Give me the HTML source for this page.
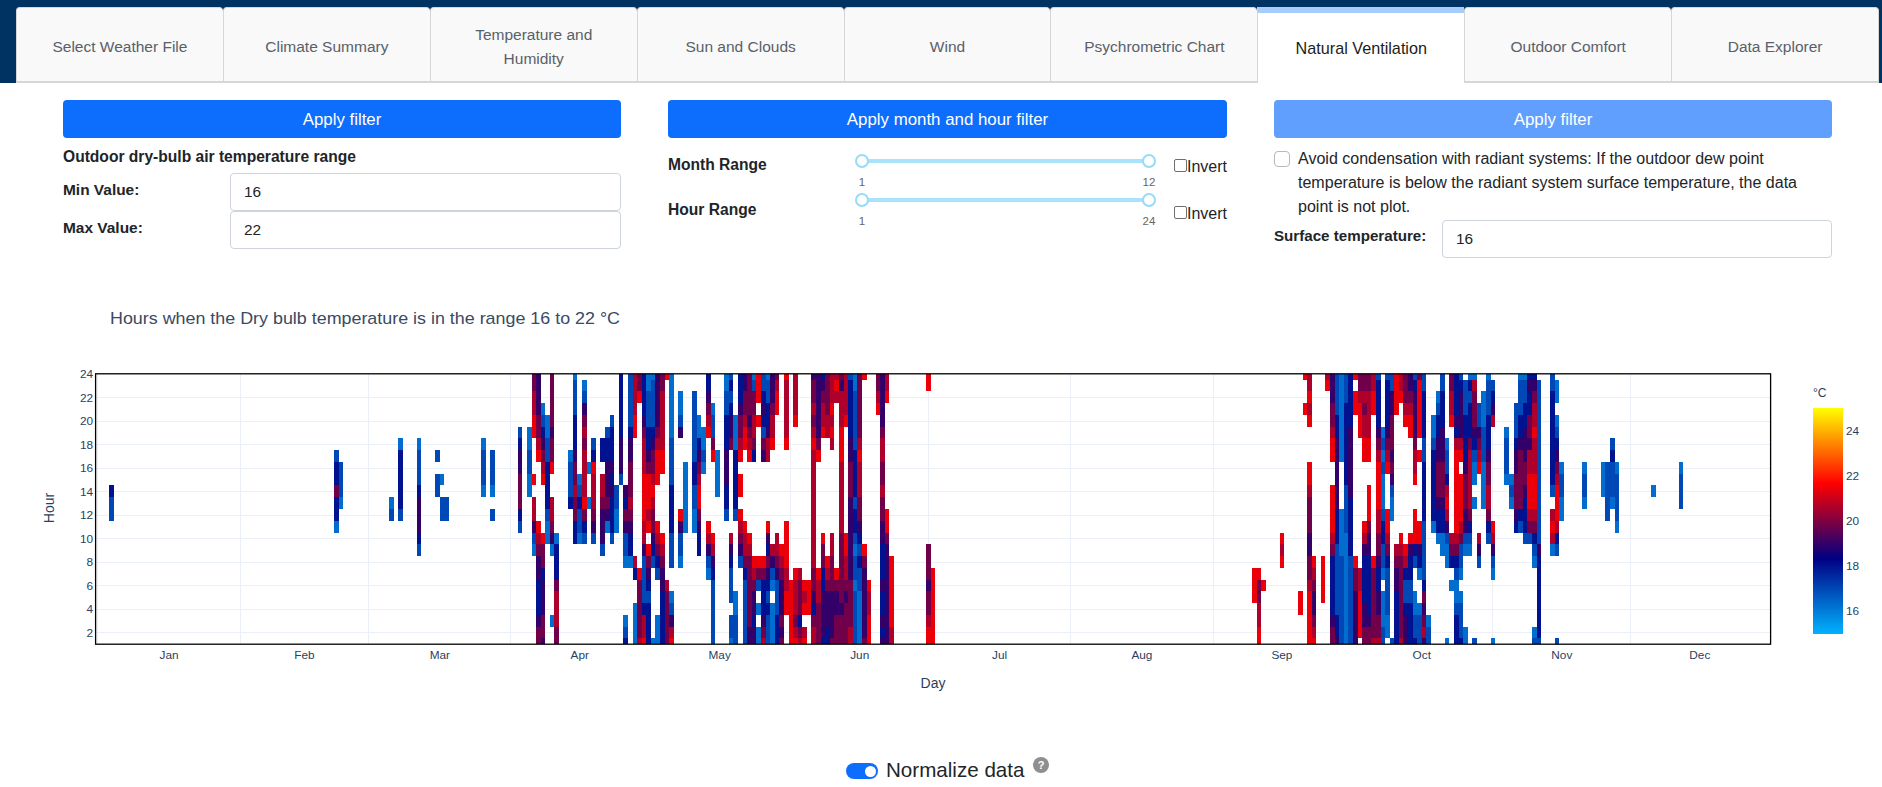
<!DOCTYPE html>
<html lang="en">
<head>
<meta charset="utf-8">
<title>Natural Ventilation</title>
<style>
html,body{margin:0;padding:0;}
body{width:1882px;height:787px;position:relative;overflow:hidden;background:#fff;font-family:"Liberation Sans",sans-serif;color:#212529;}
.abs{position:absolute;}
#navtop{left:0;top:0;width:1882px;height:83px;background:#003262;}
#tabs{left:16px;top:7px;width:1863px;height:76px;display:flex;}
.tab{flex:1 1 0;box-sizing:border-box;height:76px;background:#f9f9f9;border:1px solid #d6d6d6;border-bottom:2px solid #d6d6d6;border-right:none;border-radius:4px 4px 0 0;display:flex;align-items:center;justify-content:center;text-align:center;color:#5a6068;font-size:15.5px;line-height:24px;padding-top:4px;}
.tab:last-child{border-right:1px solid #d6d6d6;}
.tab.sel{background:#fff;border-top:6px solid #a9cdfb;border-bottom:none;color:#1b1e21;padding-top:0px;font-size:16.2px;border-radius:0;}
.btn{height:38px;border-radius:4px;background:#0d6efd;color:#fff;font-size:16.85px;text-align:center;line-height:40.5px;overflow:hidden;}
.btn.dis{background:#619ffe;}
.lbl{font-weight:bold;font-size:15.6px;color:#212529;white-space:nowrap;}
.inp{box-sizing:border-box;height:38px;border:1px solid #ced4da;border-radius:4px;background:#fff;font-size:15.4px;line-height:36px;padding-left:13px;color:#212529;}
.track{height:4px;border-radius:2px;background:#abe2fb;}
.hnd{width:10px;height:10px;border:2px solid #96dbfa;border-radius:50%;background:#fff;}
.mark{font-size:11.5px;color:#666;text-align:center;width:30px;}
.cb{width:11px;height:11px;border:1px solid #6f6f6f;border-radius:2px;background:#fff;}
.inv{font-size:16px;color:#212529;}
</style>
</head>
<body>
<div id="navtop" class="abs"></div>
<div id="tabs" class="abs">
  <div class="tab">Select Weather File</div>
  <div class="tab">Climate Summary</div>
  <div class="tab">Temperature and<br>Humidity</div>
  <div class="tab">Sun and Clouds</div>
  <div class="tab">Wind</div>
  <div class="tab">Psychrometric Chart</div>
  <div class="tab sel">Natural Ventilation</div>
  <div class="tab">Outdoor Comfort</div>
  <div class="tab">Data Explorer</div>
</div>

<!-- column 1 -->
<div class="abs btn" style="left:63px;top:100px;width:558px;">Apply filter</div>
<div class="abs lbl" style="left:63px;top:148px;">Outdoor dry-bulb air temperature range</div>
<div class="abs lbl" style="left:63px;top:181px;font-size:15.45px;">Min Value:</div>
<div class="abs inp" style="left:230px;top:173px;width:391px;">16</div>
<div class="abs lbl" style="left:63px;top:219px;font-size:15.45px;">Max Value:</div>
<div class="abs inp" style="left:230px;top:211px;width:391px;">22</div>

<!-- column 2 -->
<div class="abs btn" style="left:668px;top:100px;width:559px;">Apply month and hour filter</div>
<div class="abs lbl" style="left:668px;top:156px;">Month Range</div>
<div class="abs track" style="left:862px;top:159px;width:287px;"></div>
<div class="abs hnd" style="left:855px;top:154px;"></div>
<div class="abs hnd" style="left:1142px;top:154px;"></div>
<div class="abs mark" style="left:847px;top:176px;">1</div>
<div class="abs mark" style="left:1134px;top:176px;">12</div>
<div class="abs cb" style="left:1174px;top:159px;"></div>
<div class="abs inv" style="left:1187px;top:158px;">Invert</div>

<div class="abs lbl" style="left:668px;top:201px;">Hour Range</div>
<div class="abs track" style="left:862px;top:198px;width:287px;"></div>
<div class="abs hnd" style="left:855px;top:193px;"></div>
<div class="abs hnd" style="left:1142px;top:193px;"></div>
<div class="abs mark" style="left:847px;top:215px;">1</div>
<div class="abs mark" style="left:1134px;top:215px;">24</div>
<div class="abs cb" style="left:1174px;top:206px;"></div>
<div class="abs inv" style="left:1187px;top:205px;">Invert</div>

<!-- column 3 -->
<div class="abs btn dis" style="left:1274px;top:100px;width:558px;">Apply filter</div>
<div class="abs" style="left:1274px;top:151px;width:14px;height:14px;border:1px solid #b5b9bd;border-radius:4px;background:#fff;"></div>
<div class="abs" style="left:1298px;top:146px;width:540px;font-size:16.05px;line-height:24px;color:#212529;">Avoid condensation with radiant systems: If the outdoor dew point<br>temperature is below the radiant system surface temperature, the data<br>point is not plot.</div>
<div class="abs lbl" style="left:1274px;top:227px;font-size:15.15px;">Surface temperature:</div>
<div class="abs inp" style="left:1442px;top:220px;width:390px;">16</div>

<!-- chart -->
<div class="abs" id="chart" style="left:0;top:290px;width:1882px;height:440px;">
<svg id="svgchart" width="1882" height="440" viewBox="0 290 1882 440" style="font-family:'Liberation Sans',sans-serif;">
<defs><linearGradient id="cb" x1="0" y1="1" x2="0" y2="0">
<stop offset="0" stop-color="#00b3ff"/><stop offset="0.3333" stop-color="#000083"/><stop offset="0.6667" stop-color="#ff0000"/><stop offset="1" stop-color="#ffff00"/>
</linearGradient></defs>
<text x="110" y="324" font-size="17" fill="#3a4a63" textLength="510" lengthAdjust="spacingAndGlyphs">Hours when the Dry bulb temperature is in the range 16 to 22 °C</text>
<g stroke="#ebf0f8" stroke-width="1" shape-rendering="crispEdges">
<line x1="97.5" y1="374" x2="97.5" y2="644"/>
<line x1="240.5" y1="374" x2="240.5" y2="644"/>
<line x1="368.5" y1="374" x2="368.5" y2="644"/>
<line x1="510.5" y1="374" x2="510.5" y2="644"/>
<line x1="648.5" y1="374" x2="648.5" y2="644"/>
<line x1="790.5" y1="374" x2="790.5" y2="644"/>
<line x1="928.5" y1="374" x2="928.5" y2="644"/>
<line x1="1070.5" y1="374" x2="1070.5" y2="644"/>
<line x1="1213.5" y1="374" x2="1213.5" y2="644"/>
<line x1="1350.5" y1="374" x2="1350.5" y2="644"/>
<line x1="1492.5" y1="374" x2="1492.5" y2="644"/>
<line x1="1630.5" y1="374" x2="1630.5" y2="644"/>
<line x1="96" y1="632.5" x2="1770" y2="632.5"/>
<line x1="96" y1="609.5" x2="1770" y2="609.5"/>
<line x1="96" y1="585.5" x2="1770" y2="585.5"/>
<line x1="96" y1="562.5" x2="1770" y2="562.5"/>
<line x1="96" y1="538.5" x2="1770" y2="538.5"/>
<line x1="96" y1="515.5" x2="1770" y2="515.5"/>
<line x1="96" y1="491.5" x2="1770" y2="491.5"/>
<line x1="96" y1="468.5" x2="1770" y2="468.5"/>
<line x1="96" y1="444.5" x2="1770" y2="444.5"/>
<line x1="96" y1="421.5" x2="1770" y2="421.5"/>
<line x1="96" y1="397.5" x2="1770" y2="397.5"/>
</g>
<g shape-rendering="crispEdges">
<path fill="#006dcf" d="M334 521h5v12h-5zM339 497h4v12h-4zM389 497h5v12h-5zM398 438h5v12h-5zM417 438h4v12h-4zM440 474h4v11h-4zM481 485h5v12h-5zM481 438h5v12h-5zM490 485h5v12h-5zM527 474h5v23h-5zM527 427h5v23h-5zM532 544h4v12h-4zM541 403h4v12h-4zM545 521h5v23h-5zM545 415h5v23h-5zM550 615h4v12h-4zM550 544h4v12h-4zM554 533h5v11h-5zM568 450h5v12h-5zM573 374h4v6h-4zM577 533h5v11h-5zM577 474h5v11h-5zM582 380h5v11h-5zM587 497h4v12h-4zM587 462h4v12h-4zM605 521h5v12h-5zM614 509h5v24h-5zM623 615h5v12h-5zM623 556h5v12h-5zM628 556h5v12h-5zM633 603h4v41h-4zM646 374h5v17h-5zM651 638h4v6h-4zM651 374h4v6h-4zM655 615h5v29h-5zM669 591h5v12h-5zM669 374h5v64h-5zM678 556h5v12h-5zM678 391h5v24h-5zM683 462h5v71h-5zM692 509h5v24h-5zM697 415h4v23h-4zM701 462h5v12h-5zM701 427h5v23h-5zM706 568h5v12h-5zM711 403h4v12h-4zM715 450h5v47h-5zM724 374h5v17h-5zM729 638h4v6h-4zM733 591h5v24h-5zM733 415h5v35h-5zM752 374h4v6h-4zM756 627h5v17h-5zM756 603h5v12h-5zM766 374h4v6h-4zM770 603h5v41h-5zM770 580h5v11h-5zM853 580h4v11h-4zM853 544h4v12h-4zM853 374h4v17h-4zM857 591h5v53h-5zM1339 509h5v47h-5zM1339 374h5v88h-5zM1344 533h4v111h-4zM1381 591h4v36h-4zM1381 568h4v12h-4zM1381 474h4v35h-4zM1381 450h4v12h-4zM1381 427h4v11h-4zM1385 615h5v23h-5zM1390 497h4v24h-4zM1413 591h4v24h-4zM1417 603h5v12h-5zM1417 568h5v12h-5zM1426 615h5v12h-5zM1431 521h5v12h-5zM1431 415h5v23h-5zM1436 533h4v11h-4zM1436 391h4v12h-4zM1440 533h5v23h-5zM1445 638h4v6h-4zM1445 544h4v24h-4zM1445 438h4v12h-4zM1449 580h5v11h-5zM1454 580h5v23h-5zM1459 591h4v12h-4zM1459 568h4v12h-4zM1463 627h5v17h-5zM1463 544h5v12h-5zM1468 544h4v12h-4zM1468 374h4v6h-4zM1472 497h5v12h-5zM1472 462h5v23h-5zM1472 374h5v6h-5zM1481 462h5v47h-5zM1481 391h5v36h-5zM1486 374h5v6h-5zM1491 638h4v6h-4zM1491 568h4v12h-4zM1504 474h5v11h-5zM1504 427h5v11h-5zM1509 497h5v12h-5zM1509 474h5v11h-5zM1518 374h5v6h-5zM1523 374h4v6h-4zM1532 627h5v11h-5zM1532 556h5v12h-5zM1550 544h5v12h-5zM1555 415h4v12h-4zM1555 380h4v23h-4zM1559 497h5v24h-5zM1559 462h5v12h-5zM1582 497h5v12h-5zM1582 462h5v12h-5zM1601 462h4v35h-4zM1610 497h5v12h-5zM1615 521h4v12h-4zM1615 462h4v12h-4zM1651 485h5v12h-5zM1679 462h4v12h-4z"/>
<path fill="#0048b5" d="M109 497h5v24h-5zM334 450h5v12h-5zM339 462h4v35h-4zM389 509h5v12h-5zM398 509h5v12h-5zM417 544h4v12h-4zM417 450h4v35h-4zM435 474h5v23h-5zM435 450h5v12h-5zM440 497h4v24h-4zM444 497h5v24h-5zM481 450h5v35h-5zM490 509h5v12h-5zM490 450h5v35h-5zM518 521h4v12h-4zM518 427h4v11h-4zM527 450h5v24h-5zM532 533h4v11h-4zM541 415h4v12h-4zM545 509h5v12h-5zM545 438h5v24h-5zM568 462h5v35h-5zM573 380h4v35h-4zM577 509h5v24h-5zM577 485h5v12h-5zM582 533h5v11h-5zM582 391h5v12h-5zM591 533h5v11h-5zM591 438h5v12h-5zM600 544h5v12h-5zM605 427h5v11h-5zM610 533h4v11h-4zM610 415h4v12h-4zM614 485h5v24h-5zM619 474h4v11h-4zM623 627h5v11h-5zM623 533h5v23h-5zM628 374h5v53h-5zM642 556h4v47h-4zM646 591h5v12h-5zM646 391h5v36h-5zM651 556h4v12h-4zM651 380h4v47h-4zM655 568h5v12h-5zM669 603h5v12h-5zM669 533h5v35h-5zM669 438h5v47h-5zM678 533h5v23h-5zM678 415h5v12h-5zM692 485h5v24h-5zM692 391h5v71h-5zM701 450h5v12h-5zM706 556h5v12h-5zM711 580h4v64h-4zM711 415h4v23h-4zM724 509h5v12h-5zM724 391h5v24h-5zM729 615h4v23h-4zM729 568h4v35h-4zM729 391h4v12h-4zM729 374h4v6h-4zM733 615h5v29h-5zM733 509h5v12h-5zM738 556h5v12h-5zM743 580h4v64h-4zM752 380h4v11h-4zM756 580h5v11h-5zM761 427h5v11h-5zM761 374h5v17h-5zM766 615h4v29h-4zM766 591h4v12h-4zM766 380h4v23h-4zM770 568h5v12h-5zM775 580h4v35h-4zM848 374h5v6h-5zM853 591h4v53h-4zM853 556h4v24h-4zM853 533h4v11h-4zM853 497h4v12h-4zM853 391h4v59h-4zM857 568h5v23h-5zM857 544h5v12h-5zM1335 544h4v71h-4zM1335 374h4v41h-4zM1339 556h5v88h-5zM1344 485h4v48h-4zM1344 374h4v29h-4zM1348 556h5v88h-5zM1376 374h5v6h-5zM1381 627h4v17h-4zM1381 544h4v24h-4zM1381 509h4v12h-4zM1381 462h4v12h-4zM1381 438h4v12h-4zM1385 568h5v47h-5zM1385 374h5v6h-5zM1390 638h4v6h-4zM1390 485h4v12h-4zM1390 374h4v17h-4zM1403 580h5v23h-5zM1408 580h5v23h-5zM1413 615h4v23h-4zM1413 556h4v12h-4zM1413 374h4v6h-4zM1417 615h5v29h-5zM1422 521h4v59h-4zM1422 438h4v24h-4zM1422 374h4v17h-4zM1426 627h5v17h-5zM1431 438h5v12h-5zM1436 403h4v12h-4zM1440 374h5v17h-5zM1445 533h4v11h-4zM1445 450h4v24h-4zM1454 603h5v12h-5zM1454 568h5v12h-5zM1459 603h4v35h-4zM1459 544h4v24h-4zM1459 374h4v6h-4zM1463 533h5v11h-5zM1463 380h5v35h-5zM1468 533h4v11h-4zM1468 391h4v12h-4zM1472 638h5v6h-5zM1472 450h5v12h-5zM1477 556h4v12h-4zM1477 403h4v24h-4zM1481 427h5v35h-5zM1486 533h5v11h-5zM1486 380h5v35h-5zM1491 556h4v12h-4zM1491 380h4v11h-4zM1504 438h5v36h-5zM1509 485h5v12h-5zM1514 403h4v35h-4zM1518 521h5v12h-5zM1518 380h5v35h-5zM1523 533h4v11h-4zM1523 380h4v23h-4zM1527 533h5v11h-5zM1532 638h5v6h-5zM1532 544h5v12h-5zM1537 638h4v6h-4zM1537 380h4v164h-4zM1550 485h5v12h-5zM1550 374h5v17h-5zM1555 638h4v6h-4zM1555 544h4v12h-4zM1555 427h4v11h-4zM1559 474h5v23h-5zM1582 474h5v23h-5zM1605 462h5v59h-5zM1610 462h5v35h-5zM1610 438h5v12h-5zM1615 474h4v47h-4zM1679 474h4v35h-4z"/>
<path fill="#00128f" d="M109 485h5v12h-5zM334 497h5v24h-5zM334 462h5v23h-5zM398 450h5v59h-5zM417 533h4v11h-4zM417 485h4v12h-4zM518 509h4v12h-4zM518 438h4v12h-4zM536 580h5v35h-5zM541 568h4v12h-4zM541 427h4v11h-4zM545 462h5v47h-5zM554 544h5v36h-5zM568 497h5v12h-5zM573 521h4v23h-4zM573 415h4v35h-4zM577 497h5v12h-5zM582 521h5v12h-5zM591 450h5v12h-5zM600 438h5v24h-5zM605 438h5v24h-5zM610 497h4v36h-4zM610 474h4v11h-4zM610 427h4v35h-4zM619 374h4v64h-4zM623 638h5v6h-5zM623 497h5v12h-5zM628 533h5v23h-5zM628 427h5v11h-5zM633 568h4v12h-4zM642 603h4v12h-4zM642 374h4v41h-4zM646 603h5v41h-5zM646 580h5v11h-5zM646 427h5v23h-5zM651 544h4v12h-4zM651 427h4v11h-4zM655 556h5v12h-5zM660 591h5v53h-5zM669 485h5v48h-5zM692 462h5v23h-5zM697 533h4v23h-4zM697 438h4v12h-4zM706 374h5v17h-5zM711 568h4v12h-4zM724 485h5v24h-5zM724 415h5v35h-5zM729 556h4v12h-4zM729 403h4v12h-4zM729 380h4v11h-4zM733 450h5v59h-5zM738 374h5v29h-5zM743 568h4v12h-4zM752 615h4v12h-4zM752 450h4v12h-4zM761 580h5v35h-5zM761 415h5v12h-5zM761 391h5v12h-5zM766 603h4v12h-4zM766 580h4v11h-4zM766 544h4v12h-4zM766 403h4v24h-4zM775 615h4v29h-4zM798 615h4v12h-4zM811 603h5v12h-5zM821 638h4v6h-4zM821 568h4v23h-4zM821 374h4v6h-4zM825 627h5v17h-5zM848 380h5v58h-5zM853 509h4v24h-4zM853 450h4v47h-4zM857 556h5v12h-5zM857 533h5v11h-5zM880 627h5v11h-5zM880 591h5v24h-5zM880 544h5v36h-5zM1330 556h5v59h-5zM1335 615h4v23h-4zM1335 509h4v35h-4zM1335 415h4v23h-4zM1344 403h4v82h-4zM1348 497h5v59h-5zM1348 374h5v53h-5zM1362 556h5v47h-5zM1367 556h4v59h-4zM1376 568h5v23h-5zM1376 380h5v47h-5zM1381 521h4v23h-4zM1385 556h5v12h-5zM1385 380h5v47h-5zM1394 591h5v53h-5zM1403 603h5v12h-5zM1403 568h5v12h-5zM1408 603h5v41h-5zM1408 556h5v24h-5zM1413 638h4v6h-4zM1413 544h4v12h-4zM1413 380h4v11h-4zM1417 556h5v12h-5zM1422 580h4v11h-4zM1422 462h4v59h-4zM1422 391h4v47h-4zM1431 450h5v71h-5zM1436 509h4v24h-4zM1436 415h4v23h-4zM1440 509h5v24h-5zM1440 391h5v36h-5zM1445 474h4v11h-4zM1449 556h5v12h-5zM1454 615h5v29h-5zM1454 556h5v12h-5zM1454 427h5v11h-5zM1454 374h5v41h-5zM1459 638h4v6h-4zM1459 380h4v11h-4zM1463 415h5v47h-5zM1468 521h4v12h-4zM1468 403h4v35h-4zM1468 380h4v11h-4zM1472 438h5v12h-5zM1486 521h5v12h-5zM1486 415h5v35h-5zM1491 391h4v12h-4zM1514 521h4v12h-4zM1514 438h4v12h-4zM1518 509h5v12h-5zM1518 415h5v23h-5zM1523 497h4v36h-4zM1523 403h4v24h-4zM1527 391h5v24h-5zM1527 374h5v6h-5zM1532 533h5v11h-5zM1532 374h5v6h-5zM1537 556h4v82h-4zM1550 391h5v94h-5zM1555 533h4v11h-4zM1555 438h4v12h-4zM1610 450h5v12h-5z"/>
<path fill="#330069" d="M417 497h4v36h-4zM518 450h4v24h-4zM532 521h4v12h-4zM536 615h5v12h-5zM536 556h5v24h-5zM536 374h5v41h-5zM541 638h4v6h-4zM541 580h4v35h-4zM541 438h4v12h-4zM550 533h4v11h-4zM550 427h4v11h-4zM573 450h4v12h-4zM582 403h5v12h-5zM591 521h5v12h-5zM600 509h5v35h-5zM605 509h5v12h-5zM605 462h5v35h-5zM610 485h4v12h-4zM610 462h4v12h-4zM619 438h4v36h-4zM623 521h5v12h-5zM623 485h5v12h-5zM628 521h5v12h-5zM628 438h5v24h-5zM642 544h4v12h-4zM642 415h4v12h-4zM646 568h5v12h-5zM646 450h5v12h-5zM651 533h4v11h-4zM651 438h4v12h-4zM655 374h5v53h-5zM660 568h5v23h-5zM669 615h5v12h-5zM678 521h5v12h-5zM678 427h5v11h-5zM697 521h4v12h-4zM697 450h4v12h-4zM706 544h5v12h-5zM706 391h5v12h-5zM711 556h4v12h-4zM724 450h5v35h-5zM729 544h4v12h-4zM729 415h4v23h-4zM738 544h5v12h-5zM738 403h5v12h-5zM743 374h4v17h-4zM747 627h5v17h-5zM747 415h5v12h-5zM752 627h4v17h-4zM752 591h4v24h-4zM761 615h5v12h-5zM761 450h5v12h-5zM761 403h5v12h-5zM766 568h4v12h-4zM766 533h4v11h-4zM766 427h4v11h-4zM770 556h5v12h-5zM770 374h5v29h-5zM775 568h4v12h-4zM779 627h5v11h-5zM779 580h5v35h-5zM811 591h5v12h-5zM811 374h5v6h-5zM816 374h5v64h-5zM821 591h4v47h-4zM821 380h4v11h-4zM825 591h5v36h-5zM830 591h4v47h-4zM834 591h5v24h-5zM839 603h5v12h-5zM839 380h5v11h-5zM844 591h4v12h-4zM848 497h5v83h-5zM848 438h5v24h-5zM857 521h5v12h-5zM862 568h5v70h-5zM880 638h5v6h-5zM880 615h5v12h-5zM880 580h5v11h-5zM880 521h5v23h-5zM880 374h5v53h-5zM885 544h4v100h-4zM926 580h5v11h-5zM1307 533h5v23h-5zM1312 591h4v24h-4zM1330 615h5v12h-5zM1330 374h5v29h-5zM1335 638h4v6h-4zM1335 438h4v71h-4zM1348 427h5v70h-5zM1353 591h5v53h-5zM1362 603h5v24h-5zM1362 544h5v12h-5zM1367 615h4v12h-4zM1367 533h4v23h-4zM1376 591h5v24h-5zM1376 556h5v12h-5zM1376 427h5v11h-5zM1385 427h5v11h-5zM1390 474h4v11h-4zM1390 450h4v12h-4zM1390 391h4v24h-4zM1394 568h5v23h-5zM1403 615h5v29h-5zM1408 544h5v12h-5zM1408 374h5v17h-5zM1413 391h4v47h-4zM1417 544h5v12h-5zM1422 638h4v6h-4zM1422 603h4v12h-4zM1436 497h4v12h-4zM1436 438h4v24h-4zM1440 497h5v12h-5zM1440 427h5v35h-5zM1445 521h4v12h-4zM1454 415h5v12h-5zM1459 391h4v47h-4zM1463 509h5v24h-5zM1463 462h5v12h-5zM1472 427h5v11h-5zM1477 544h4v12h-4zM1477 427h4v11h-4zM1486 450h5v12h-5zM1491 544h4v12h-4zM1491 403h4v12h-4zM1514 509h4v12h-4zM1514 450h4v24h-4zM1518 438h5v12h-5zM1523 485h4v12h-4zM1523 427h4v35h-4zM1527 438h5v12h-5zM1527 380h5v11h-5zM1532 380h5v11h-5zM1537 544h4v12h-4zM1555 450h4v12h-4z"/>
<path fill="#700049" d="M334 485h5v12h-5zM518 474h4v35h-4zM532 374h4v17h-4zM536 627h5v17h-5zM536 544h5v12h-5zM536 415h5v23h-5zM541 615h4v23h-4zM541 544h4v24h-4zM541 450h4v12h-4zM550 521h4v12h-4zM550 438h4v24h-4zM550 374h4v53h-4zM554 627h5v17h-5zM554 580h5v11h-5zM573 497h4v24h-4zM573 462h4v23h-4zM582 509h5v12h-5zM582 438h5v12h-5zM582 415h5v12h-5zM591 509h5v12h-5zM600 497h5v12h-5zM605 497h5v12h-5zM623 509h5v12h-5zM628 509h5v12h-5zM628 462h5v35h-5zM637 580h5v58h-5zM637 374h5v17h-5zM642 427h4v11h-4zM646 556h5v12h-5zM646 462h5v12h-5zM651 509h4v24h-4zM651 450h4v24h-4zM655 544h5v12h-5zM655 427h5v11h-5zM660 556h5v12h-5zM660 374h5v17h-5zM665 591h4v53h-4zM697 509h4v12h-4zM697 462h4v12h-4zM706 403h5v12h-5zM711 438h4v12h-4zM729 438h4v12h-4zM738 533h5v11h-5zM738 415h5v23h-5zM743 556h4v12h-4zM743 391h4v24h-4zM747 556h5v71h-5zM747 427h5v11h-5zM747 374h5v41h-5zM752 580h4v11h-4zM752 438h4v12h-4zM752 391h4v24h-4zM756 568h5v12h-5zM761 627h5v11h-5zM761 568h5v12h-5zM761 438h5v12h-5zM766 556h4v12h-4zM770 403h5v12h-5zM775 556h4v12h-4zM775 374h4v6h-4zM779 638h5v6h-5zM779 615h5v12h-5zM779 568h5v12h-5zM793 615h5v12h-5zM798 627h4v11h-4zM798 580h4v35h-4zM811 615h5v12h-5zM811 568h5v23h-5zM811 415h5v12h-5zM811 380h5v23h-5zM816 603h5v41h-5zM816 438h5v12h-5zM821 544h4v24h-4zM821 391h4v12h-4zM825 580h5v11h-5zM825 374h5v41h-5zM830 638h4v6h-4zM830 556h4v35h-4zM834 615h5v29h-5zM834 580h5v11h-5zM839 615h5v29h-5zM839 533h5v70h-5zM839 374h5v6h-5zM844 603h4v41h-4zM844 580h4v11h-4zM848 580h5v47h-5zM848 462h5v35h-5zM857 497h5v24h-5zM857 374h5v64h-5zM862 638h5v6h-5zM862 556h5v12h-5zM876 374h4v17h-4zM880 497h5v24h-5zM880 462h5v23h-5zM880 427h5v11h-5zM885 533h4v11h-4zM926 591h5v24h-5zM926 544h5v36h-5zM1257 580h4v23h-4zM1307 556h5v24h-5zM1307 497h5v36h-5zM1312 615h4v12h-4zM1312 580h4v11h-4zM1330 627h5v17h-5zM1330 544h5v12h-5zM1330 403h5v24h-5zM1353 568h5v23h-5zM1358 374h4v17h-4zM1362 627h5v17h-5zM1362 403h5v12h-5zM1362 374h5v17h-5zM1367 627h4v17h-4zM1367 521h4v12h-4zM1367 374h4v17h-4zM1371 568h5v70h-5zM1376 615h5v23h-5zM1376 533h5v23h-5zM1376 438h5v12h-5zM1385 544h5v12h-5zM1385 438h5v12h-5zM1390 462h4v12h-4zM1390 415h4v35h-4zM1394 556h5v12h-5zM1399 556h4v82h-4zM1403 374h5v29h-5zM1408 391h5v12h-5zM1413 438h4v12h-4zM1417 374h5v6h-5zM1422 615h4v12h-4zM1422 591h4v12h-4zM1436 462h4v35h-4zM1440 462h5v35h-5zM1449 544h5v12h-5zM1449 374h5v17h-5zM1454 544h5v12h-5zM1459 533h4v11h-4zM1463 474h5v35h-5zM1468 509h4v12h-4zM1468 438h4v12h-4zM1472 391h5v36h-5zM1477 438h4v12h-4zM1486 509h5v12h-5zM1486 462h5v23h-5zM1514 474h4v35h-4zM1518 450h5v59h-5zM1523 462h4v23h-4zM1527 521h5v12h-5zM1527 415h5v23h-5zM1532 521h5v12h-5zM1532 391h5v12h-5zM1555 462h4v12h-4z"/>
<path fill="#ad002a" d="M532 497h4v24h-4zM532 391h4v24h-4zM536 533h5v11h-5zM536 438h5v12h-5zM541 462h4v12h-4zM550 497h4v24h-4zM554 591h5v36h-5zM573 485h4v12h-4zM582 450h5v47h-5zM582 427h5v11h-5zM591 474h5v35h-5zM600 474h5v23h-5zM628 497h5v12h-5zM633 556h4v12h-4zM633 374h4v41h-4zM637 638h5v6h-5zM642 615h4v23h-4zM642 521h4v23h-4zM642 438h4v36h-4zM646 509h5v12h-5zM651 497h4v12h-4zM651 474h4v11h-4zM655 533h5v11h-5zM655 438h5v12h-5zM660 544h5v12h-5zM660 391h5v59h-5zM665 580h4v11h-4zM669 627h5v11h-5zM697 474h4v11h-4zM706 533h5v11h-5zM706 415h5v12h-5zM711 544h4v12h-4zM729 533h4v11h-4zM738 521h5v12h-5zM738 438h5v12h-5zM743 533h4v23h-4zM743 415h4v12h-4zM747 544h5v12h-5zM747 438h5v12h-5zM752 568h4v12h-4zM752 415h4v23h-4zM761 638h5v6h-5zM766 438h4v24h-4zM770 544h5v12h-5zM770 415h5v23h-5zM775 533h4v23h-4zM775 380h4v11h-4zM779 556h5v12h-5zM784 568h5v23h-5zM784 380h5v58h-5zM793 627h5v11h-5zM793 580h5v35h-5zM793 374h5v41h-5zM798 638h4v6h-4zM798 568h4v12h-4zM802 627h5v11h-5zM802 591h5v12h-5zM811 627h5v17h-5zM811 450h5v118h-5zM811 427h5v11h-5zM811 403h5v12h-5zM816 580h5v23h-5zM821 403h4v24h-4zM825 568h5v12h-5zM825 415h5v23h-5zM830 533h4v23h-4zM830 438h4v12h-4zM830 415h4v12h-4zM830 374h4v29h-4zM834 391h5v12h-5zM834 374h5v6h-5zM839 462h5v71h-5zM839 391h5v36h-5zM844 556h4v24h-4zM844 374h4v41h-4zM848 627h5v17h-5zM857 462h5v35h-5zM857 438h5v12h-5zM867 591h4v24h-4zM876 391h4v12h-4zM880 485h5v12h-5zM880 438h5v24h-5zM885 374h4v17h-4zM889 627h5v17h-5zM926 615h5v12h-5zM1257 603h4v24h-4zM1280 544h4v12h-4zM1307 580h5v11h-5zM1307 485h5v12h-5zM1307 403h5v12h-5zM1307 374h5v17h-5zM1312 627h4v11h-4zM1312 568h4v12h-4zM1325 374h5v6h-5zM1330 533h5v11h-5zM1330 427h5v11h-5zM1358 568h4v23h-4zM1358 391h4v12h-4zM1362 533h5v11h-5zM1362 415h5v23h-5zM1362 391h5v12h-5zM1367 391h4v47h-4zM1371 638h5v6h-5zM1371 374h5v17h-5zM1376 638h5v6h-5zM1376 509h5v24h-5zM1376 450h5v12h-5zM1385 533h5v11h-5zM1385 450h5v12h-5zM1394 544h5v12h-5zM1399 638h4v6h-4zM1399 544h4v12h-4zM1399 374h4v17h-4zM1403 556h5v12h-5zM1403 403h5v12h-5zM1408 403h5v12h-5zM1413 450h4v24h-4zM1422 627h4v11h-4zM1445 509h4v12h-4zM1445 485h4v12h-4zM1449 533h5v11h-5zM1449 391h5v24h-5zM1454 533h5v11h-5zM1454 438h5v12h-5zM1459 521h4v12h-4zM1459 438h4v12h-4zM1468 450h4v59h-4zM1472 380h5v11h-5zM1477 533h4v11h-4zM1477 450h4v12h-4zM1486 485h5v24h-5zM1491 533h4v11h-4zM1491 415h4v12h-4zM1527 509h5v12h-5zM1527 450h5v24h-5zM1532 509h5v12h-5zM1532 438h5v36h-5zM1532 403h5v24h-5zM1550 533h5v11h-5zM1550 509h5v12h-5zM1555 521h4v12h-4zM1555 474h4v11h-4z"/>
<path fill="#eb000a" d="M532 474h4v11h-4zM532 415h4v23h-4zM536 521h5v12h-5zM536 450h5v12h-5zM541 533h4v11h-4zM541 474h4v11h-4zM550 462h4v12h-4zM582 497h5v12h-5zM591 462h5v12h-5zM633 415h4v23h-4zM637 568h5v12h-5zM637 391h5v12h-5zM642 638h4v6h-4zM642 474h4v47h-4zM646 544h5v12h-5zM646 521h5v12h-5zM646 474h5v35h-5zM651 485h4v12h-4zM655 521h5v12h-5zM655 450h5v35h-5zM660 533h5v11h-5zM660 450h5v24h-5zM665 374h4v6h-4zM669 638h5v6h-5zM678 509h5v12h-5zM697 485h4v24h-4zM706 521h5v12h-5zM706 427h5v11h-5zM711 533h4v11h-4zM711 450h4v12h-4zM738 509h5v12h-5zM738 474h5v23h-5zM738 450h5v12h-5zM743 521h4v12h-4zM743 427h4v23h-4zM747 533h5v11h-5zM747 450h5v12h-5zM752 556h4v12h-4zM756 556h5v12h-5zM756 415h5v12h-5zM756 374h5v29h-5zM761 556h5v12h-5zM766 521h4v12h-4zM770 438h5v12h-5zM775 391h4v24h-4zM779 544h5v12h-5zM784 591h5v24h-5zM784 521h5v47h-5zM784 438h5v12h-5zM784 374h5v6h-5zM789 580h4v64h-4zM793 638h5v6h-5zM793 568h5v12h-5zM793 415h5v12h-5zM802 638h5v6h-5zM802 603h5v12h-5zM802 580h5v11h-5zM807 580h4v35h-4zM811 438h5v12h-5zM816 568h5v12h-5zM816 450h5v12h-5zM821 533h4v11h-4zM821 427h4v11h-4zM825 556h5v12h-5zM830 427h4v11h-4zM830 403h4v12h-4zM834 568h5v12h-5zM834 380h5v11h-5zM839 427h5v35h-5zM844 533h4v23h-4zM844 415h4v12h-4zM857 450h5v12h-5zM862 544h5v12h-5zM862 374h5v6h-5zM867 615h4v29h-4zM867 580h4v11h-4zM876 403h4v12h-4zM885 509h4v24h-4zM885 391h4v12h-4zM889 556h5v71h-5zM926 627h5v17h-5zM926 374h5v17h-5zM931 568h4v76h-4zM1252 568h5v35h-5zM1257 627h4v17h-4zM1257 568h4v12h-4zM1261 580h5v11h-5zM1280 556h4v12h-4zM1280 533h4v11h-4zM1298 591h5v24h-5zM1303 403h4v12h-4zM1303 374h4v6h-4zM1307 591h5v53h-5zM1307 462h5v23h-5zM1307 415h5v12h-5zM1307 391h5v12h-5zM1312 638h4v6h-4zM1312 556h4v12h-4zM1321 556h4v47h-4zM1325 380h5v11h-5zM1330 485h5v48h-5zM1330 438h5v24h-5zM1353 556h5v12h-5zM1353 391h5v24h-5zM1353 374h5v6h-5zM1358 591h4v47h-4zM1358 403h4v35h-4zM1362 521h5v12h-5zM1362 438h5v24h-5zM1367 485h4v36h-4zM1367 438h4v24h-4zM1371 556h5v12h-5zM1371 391h5v24h-5zM1376 462h5v47h-5zM1385 509h5v24h-5zM1385 462h5v12h-5zM1394 374h5v41h-5zM1399 533h4v11h-4zM1399 391h4v12h-4zM1403 544h5v12h-5zM1403 415h5v12h-5zM1408 533h5v11h-5zM1408 415h5v23h-5zM1413 509h4v35h-4zM1413 474h4v11h-4zM1417 521h5v23h-5zM1417 450h5v12h-5zM1417 380h5v58h-5zM1445 497h4v12h-4zM1449 415h5v12h-5zM1454 450h5v83h-5zM1459 474h4v47h-4zM1459 450h4v12h-4zM1477 462h4v12h-4zM1491 521h4v12h-4zM1527 474h5v35h-5zM1532 474h5v35h-5zM1532 427h5v11h-5zM1550 521h5v12h-5zM1555 485h4v36h-4z"/>
</g>
<rect x="95.6" y="373.8" width="1675" height="270.4" fill="none" stroke="#000" stroke-width="1.3"/>
<g font-size="11.8" fill="#2a3f5f" text-anchor="end">
<text x="93" y="636.7">2</text>
<text x="93" y="613.2">4</text>
<text x="93" y="589.7">6</text>
<text x="93" y="566.2">8</text>
<text x="93" y="542.7">10</text>
<text x="93" y="519.2">12</text>
<text x="93" y="495.7">14</text>
<text x="93" y="472.1">16</text>
<text x="93" y="448.6">18</text>
<text x="93" y="425.1">20</text>
<text x="93" y="401.6">22</text>
<text x="93" y="378.1">24</text>
</g>
<g font-size="11.8" fill="#2a3f5f" text-anchor="middle">
<text x="169.0" y="659.3">Jan</text>
<text x="304.4" y="659.3">Feb</text>
<text x="439.8" y="659.3">Mar</text>
<text x="579.7" y="659.3">Apr</text>
<text x="719.7" y="659.3">May</text>
<text x="859.7" y="659.3">Jun</text>
<text x="999.6" y="659.3">Jul</text>
<text x="1141.9" y="659.3">Aug</text>
<text x="1281.9" y="659.3">Sep</text>
<text x="1421.8" y="659.3">Oct</text>
<text x="1561.8" y="659.3">Nov</text>
<text x="1699.8" y="659.3">Dec</text>
</g>
<text x="933" y="688" font-size="14" fill="#2a3f5f" text-anchor="middle">Day</text>
<text transform="translate(54,508) rotate(-90)" font-size="14" fill="#2a3f5f" text-anchor="middle">Hour</text>
<rect x="1813" y="408" width="30" height="226" fill="url(#cb)"/>
<text x="1813" y="397" font-size="12" fill="#2a3f5f">°C</text>
<g font-size="11.8" fill="#2a3f5f">
<text x="1846" y="434.8">24</text><text x="1846" y="479.8">22</text><text x="1846" y="524.8">20</text><text x="1846" y="569.8">18</text><text x="1846" y="615.3">16</text>
</g>
</svg>
</div>

<!-- normalize switch -->
<div class="abs" style="left:846px;top:763px;width:32px;height:16px;border-radius:8px;background:#0d6efd;"></div>
<div class="abs" style="left:864.5px;top:765.5px;width:11px;height:11px;border-radius:50%;background:#fff;"></div>
<div class="abs" style="left:886px;top:757.5px;font-size:20.6px;color:#212529;white-space:nowrap;">Normalize data</div>
<div class="abs" style="left:1033px;top:757px;width:16px;height:16px;border-radius:50%;background:#8f8f8f;color:#fff;font-size:11px;font-weight:bold;line-height:16px;text-align:center;">?</div>
</body>
</html>
